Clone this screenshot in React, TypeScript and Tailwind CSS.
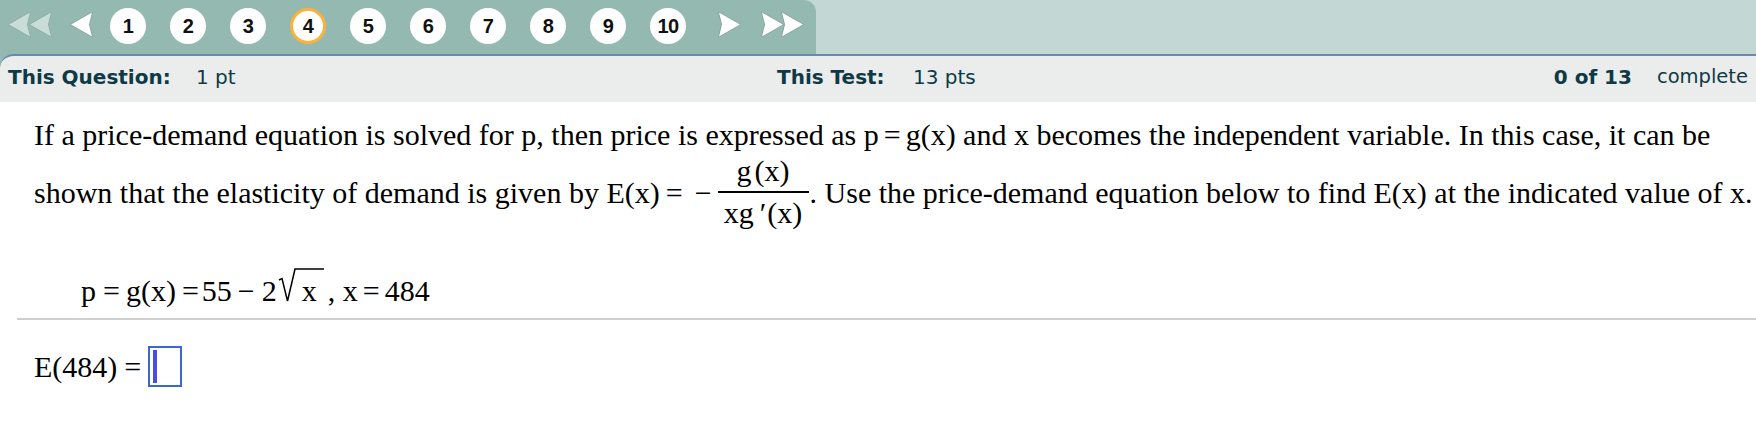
const nums = [1, 2, 3, 4, 5, 6, 7, 8, 9, 10];

function Eq({ m = "mx-[5px]" }: { m?: string }) {
  return <span className={`inline-block ${m}`}>=</span>;
}

function Left({ x }: { x: number }) {
  return (
    <path
      d={`M${x} 16.5 L${x + 21} 4.5 L${x + 18} 16.5 L${x + 21} 28.5 Z`}
      fill="#fff"
      stroke="#7f9f98"
      strokeWidth={1.4}
      strokeLinejoin="round"
      paintOrder="stroke"
    />
  );
}

function Right({ x }: { x: number }) {
  return (
    <path
      d={`M${x} 4.5 L${x + 21} 16.5 L${x} 28.5 L${x + 3} 16.5 Z`}
      fill="#fff"
      stroke="#7f9f98"
      strokeWidth={1.4}
      strokeLinejoin="round"
      paintOrder="stroke"
    />
  );
}

export default function App() {
  return (
    <div className="w-[1756px] h-[424px] bg-white overflow-hidden font-['Liberation_Serif',serif] text-[30px] text-black">
      <div className="h-[54px] bg-[#c3d8d5]">
        <div className="w-[816px] h-[54px] bg-[#94b9b1] rounded-tr-[12px] flex items-start pt-[8px]">
          <svg width="110" height="36" viewBox="0 0 110 36" className="block shrink-0">
            <g opacity={0.5}>
              <Left x={9} />
              <Left x={30} />
            </g>
            <Left x={71} />
          </svg>
          <div className="flex gap-[24px]">
            {nums.map((n) => (
              <div
                key={n}
                className={`w-[36px] h-[36px] rounded-full bg-white flex items-center justify-center font-['Liberation_Sans',sans-serif] font-bold text-[20px] tracking-[-0.5px] text-[#111] ${
                  n === 4 ? "border-[3px] border-[#fbb13c]" : ""
                }`}
              >
                {n}
              </div>
            ))}
          </div>
          <svg width="124" height="36" viewBox="0 0 124 36" className="block shrink-0">
            <Right x={33} />
            <Right x={76} />
            <Right x={96} />
          </svg>
        </div>
      </div>

      <div className="bg-[linear-gradient(90deg,#94b9b1_0,#94b9b1_816px,#c3d8d5_816px)]">
        <div className="h-[48px] bg-[#ebeded] border-t-2 border-[#6f87ae] rounded-tl-[14px] flex items-start pt-[8px] pl-[8px] pr-[8px] font-['DejaVu_Sans',sans-serif] text-[19.5px] leading-[26px] text-[#0f3a45]">
          <div className="w-[769px] flex">
            <span className="font-bold text-[20px] w-[188px]">This Question:</span>
            <span className="text-[20px]">1 pt</span>
          </div>
          <div className="flex-1 flex">
            <span className="font-bold text-[20px] w-[136px]">This Test:</span>
            <span className="text-[20px]">13 pts</span>
          </div>
          <div className="flex">
            <span className="font-bold text-[20px] mr-[25px]">0 of 13</span>
            <span>complete</span>
          </div>
        </div>
      </div>

      <div className="pl-[34px] pt-[16px] whitespace-nowrap">
        <div className="h-[34px] leading-[34px]">
          If a price-demand equation is solved for p, then price is expressed as p<Eq />g(x) and x becomes the independent variable. In this case, it can be
        </div>
        <div className="flex items-center h-[82px] -mt-[1px]">
          <span>shown that the elasticity of demand is given by E(x)<Eq m="ml-[6px] mr-[12px]" /></span>
          <span className="mr-[6px]">−</span>
          <span className="inline-flex flex-col items-center w-[91px] leading-[34px]">
            <span className="border-b-2 border-black w-full text-center pb-[3px]">g<span className="ml-[3px]">(x)</span></span>
            <span className="pt-[3px]">xg<span className="ml-[6px]">′</span><span className="ml-[1px]">(x)</span></span>
          </span>
          <span className="ml-[1px]">. Use the price-demand equation below to find E(x) at the indicated value of x.</span>
        </div>
        <div className="mt-[39px] pl-[47px] h-[46px] flex items-start leading-[38px]">
          <span>p<Eq m="ml-[7px] mr-[6px]" />g(x)<Eq m="ml-[6px] mr-[3px]" />55<span className="ml-[6px] mr-[7px]">−</span>2</span>
          <svg width="48" height="38" viewBox="0 0 48 38" className="block shrink-0 -mr-[23px] -mt-[4px]">
            <path d="M2 12 L5 10.5 L10.5 33 L18 1 L47 1" fill="none" stroke="#000" strokeWidth="1.5" />
          </svg>
          <span>x</span>
          <span className="ml-[11px]">, x<Eq />484</span>
        </div>
      </div>

      <div className="ml-[17px] h-[2px] bg-[#cfcfcf]" />

      <div className="pl-[34px] pt-[24px] flex items-center">
        <span>E(484)<Eq m="ml-[7px] mr-[7px]" /></span>
        <span className="w-[34px] h-[41px] border-2 border-[#3a68d0] flex items-center pl-[3px]">
          <span className="block w-[4px] h-[33px] bg-[#4a4af0]" />
        </span>
      </div>
    </div>
  );
}
